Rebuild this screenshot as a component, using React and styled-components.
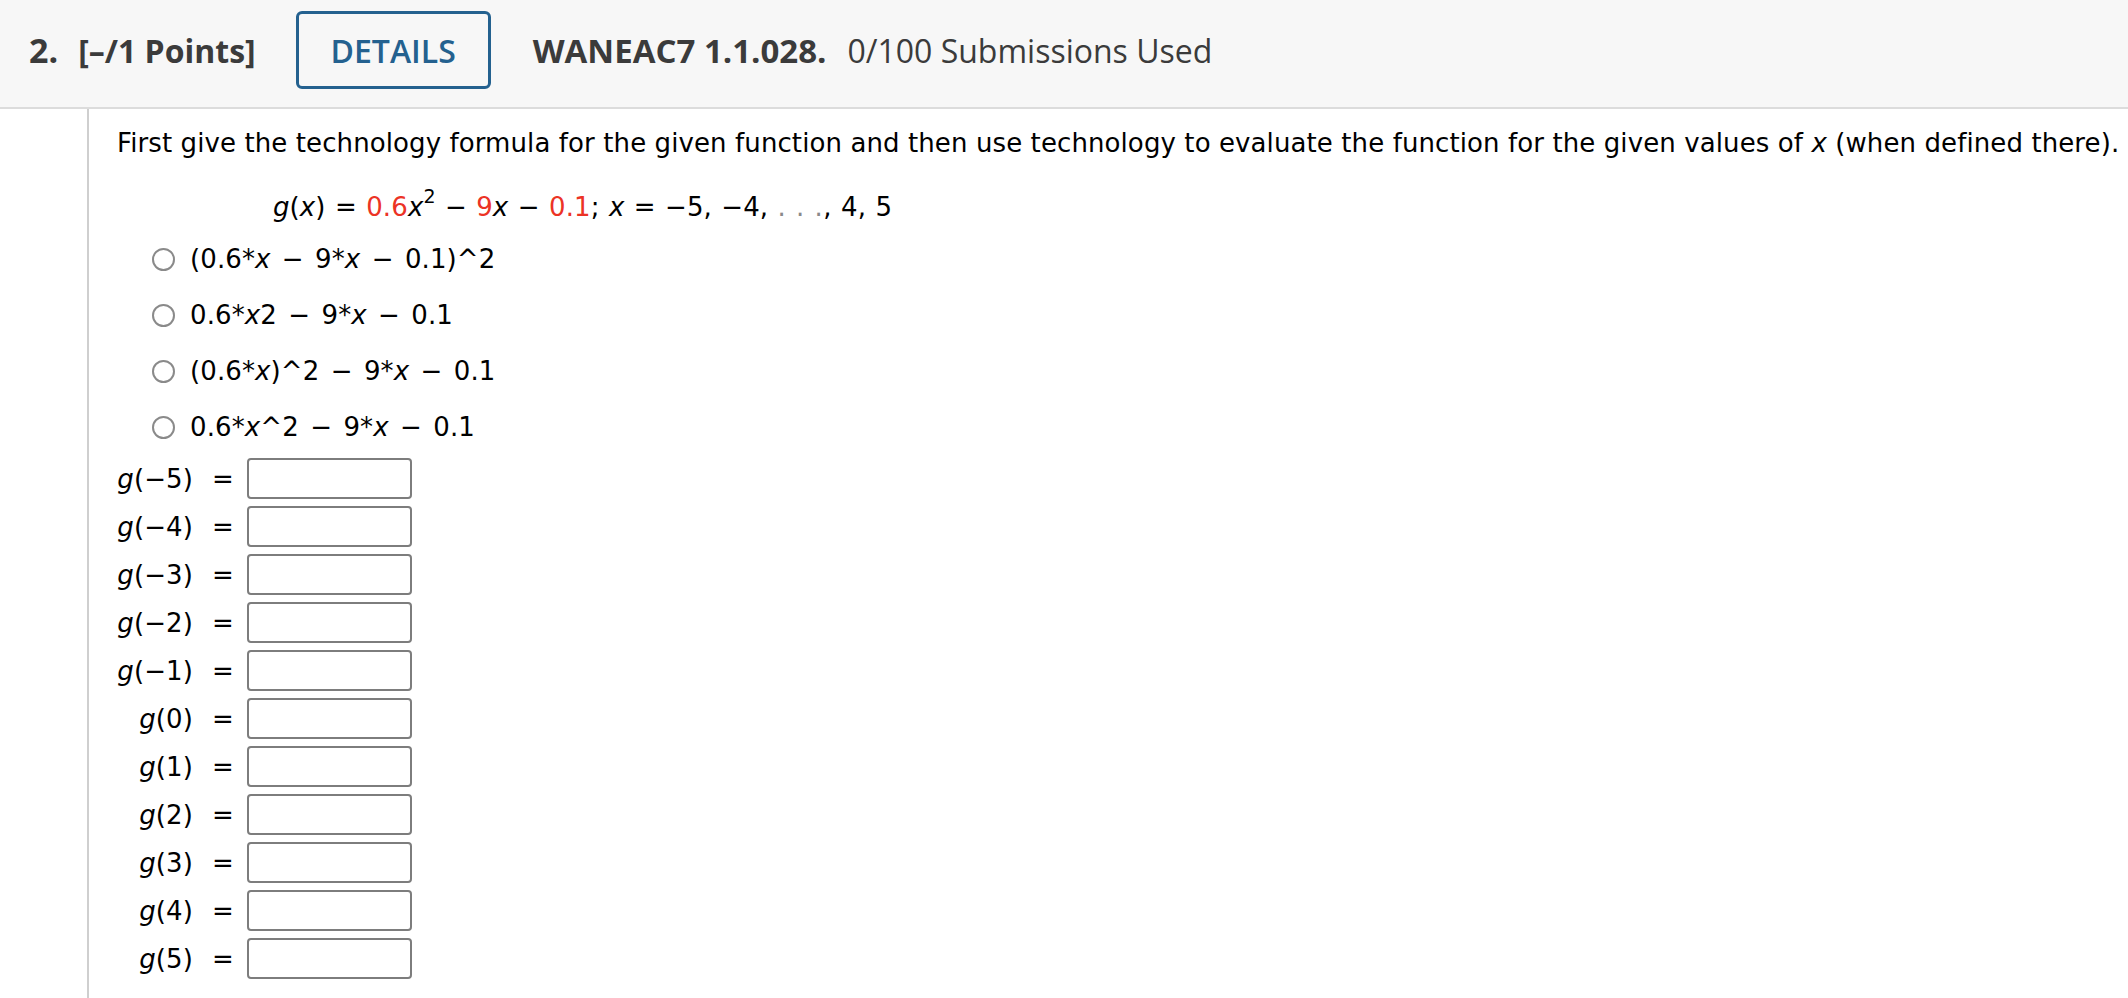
import styled, { createGlobalStyle } from "styled-components";

const GlobalStyle = createGlobalStyle`
    body {
        margin: 0;
        background: #fff;
        font-family: "DejaVu Sans", Verdana, sans-serif;
    }
`;

const options = [
    [["(0.6*"], ["x", true], [" − 9*"], ["x", true], [" − 0.1)^2"]],
    [["0.6*"], ["x", true], ["2 − 9*"], ["x", true], [" − 0.1"]],
    [["(0.6*"], ["x", true], [")^2 − 9*"], ["x", true], [" − 0.1"]],
    [["0.6*"], ["x", true], ["^2 − 9*"], ["x", true], [" − 0.1"]],
];

const values = [-5, -4, -3, -2, -1, 0, 1, 2, 3, 4, 5];

export default function App() {
    return (
        <>
            <GlobalStyle />
            <StyledHeader>
                <StyledNumber>2.</StyledNumber>
                <StyledPoints>[–/1 Points]</StyledPoints>
                <StyledDetailsButton>DETAILS</StyledDetailsButton>
                <StyledCode>WANEAC7 1.1.028.</StyledCode>
                <StyledSubmissions>0/100 Submissions Used</StyledSubmissions>
            </StyledHeader>
            <StyledBody>
                <StyledGutter />
                <StyledContent>
                    <StyledPrompt>
                        First give the technology formula for the given function and then use technology
                        to evaluate the function for the given values of <i>x</i> (when defined there).
                    </StyledPrompt>
                    <StyledFormula>
                        <i>g</i>(<i>x</i>) = <StyledRed>0.6</StyledRed><i>x</i>
                        <sup>2</sup> − <StyledRed>9</StyledRed><i>x</i> − <StyledRed>0.1</StyledRed>;{" "}
                        <i>x</i> = −5, −4, <StyledDots>. . .</StyledDots>, 4, 5
                    </StyledFormula>
                    <StyledOptions>
                        {options.map((parts, i) => (
                            <StyledOption key={i}>
                                <StyledRadio type="radio" name="formula" />
                                <span>
                                    {parts.map(([text, italic], j) =>
                                        italic ? <i key={j}>{text}</i> : <span key={j}>{text}</span>
                                    )}
                                </span>
                            </StyledOption>
                        ))}
                    </StyledOptions>
                    <StyledAnswers>
                        {values.map((v) => (
                            <StyledAnswerRow key={v}>
                                <StyledLabel>
                                    <i>g</i>({v < 0 ? "−" + Math.abs(v) : v})
                                </StyledLabel>
                                <StyledEquals>=</StyledEquals>
                                <StyledInput type="text" />
                            </StyledAnswerRow>
                        ))}
                    </StyledAnswers>
                </StyledContent>
            </StyledBody>
        </>
    );
}

const StyledHeader = styled.div`
    display: flex;
    align-items: center;
    box-sizing: border-box;
    height: 109px;
    padding: 0 0 7px 29px;
    background: #f7f7f7;
    border-bottom: 2px solid #dcdcdc;
    font-family: "Open Sans", sans-serif;
    color: #3b3b3b;
    font-size: 32px;
`;

const StyledNumber = styled.span`
    font-weight: 700;
    font-size: 34px;
    margin-right: 20px;
`;

const StyledPoints = styled.span`
    font-weight: 700;
    font-size: 32px;
    margin-right: 40px;
`;

const StyledDetailsButton = styled.div`
    display: flex;
    align-items: center;
    justify-content: center;
    box-sizing: border-box;
    width: 195px;
    height: 78px;
    border: 3px solid #24618f;
    border-radius: 6px;
    color: #24618f;
    font-weight: 600;
    font-size: 32px;
    margin-right: 42px;
`;

const StyledCode = styled.span`
    font-weight: 700;
    font-size: 33px;
    margin-right: 21px;
`;

const StyledSubmissions = styled.span`
    font-weight: 400;
`;

const StyledBody = styled.div`
    display: flex;
    min-height: 889px;
`;

const StyledGutter = styled.div`
    width: 87px;
    flex-shrink: 0;
`;

const StyledContent = styled.div`
    flex: 1;
    border-left: 2px solid #cfcfcf;
    padding: 14px 0 0 28px;
    font-size: 26px;
    letter-spacing: 0.1px;
    color: #000;
`;

const StyledPrompt = styled.div`
    line-height: 40px;
    white-space: nowrap;
`;

const StyledFormula = styled.div`
    margin: 26px 0 0 156px;
    line-height: 36px;
    white-space: nowrap;
    word-spacing: 1px;

    sup {
        font-size: 19px;
        line-height: 0;
        vertical-align: 13px;
    }
`;

const StyledRed = styled.span`
    color: #ec3325;
`;

const StyledDots = styled.span`
    color: #8a8a8a;
    letter-spacing: 0.5px;
`;

const StyledOptions = styled.div`
    display: flex;
    flex-direction: column;
    margin-top: 6px;
`;

const StyledOption = styled.label`
    display: flex;
    align-items: center;
    gap: 15px;
    height: 56px;
    padding-left: 35px;
    white-space: nowrap;
    word-spacing: 3px;
`;

const StyledRadio = styled.input`
    appearance: none;
    flex-shrink: 0;
    margin: 0;
    width: 23px;
    height: 23px;
    border: 2px solid #8a8a8a;
    border-radius: 50%;
    background: #fff;
`;

const StyledAnswers = styled.div`
    display: flex;
    flex-direction: column;
    gap: 7px;
    margin-top: 3px;
`;

const StyledAnswerRow = styled.div`
    display: grid;
    grid-template-columns: 76px 16px 165px;
    column-gap: 19px;
    align-items: center;
`;

const StyledLabel = styled.span`
    text-align: right;
    white-space: nowrap;
`;

const StyledEquals = styled.span`
    text-align: center;
`;

const StyledInput = styled.input`
    box-sizing: border-box;
    width: 165px;
    height: 41px;
    margin: 0;
    border: 2px solid #7d7d7d;
    border-radius: 4px;
    background: #fff;
    font-size: 20px;
`;
